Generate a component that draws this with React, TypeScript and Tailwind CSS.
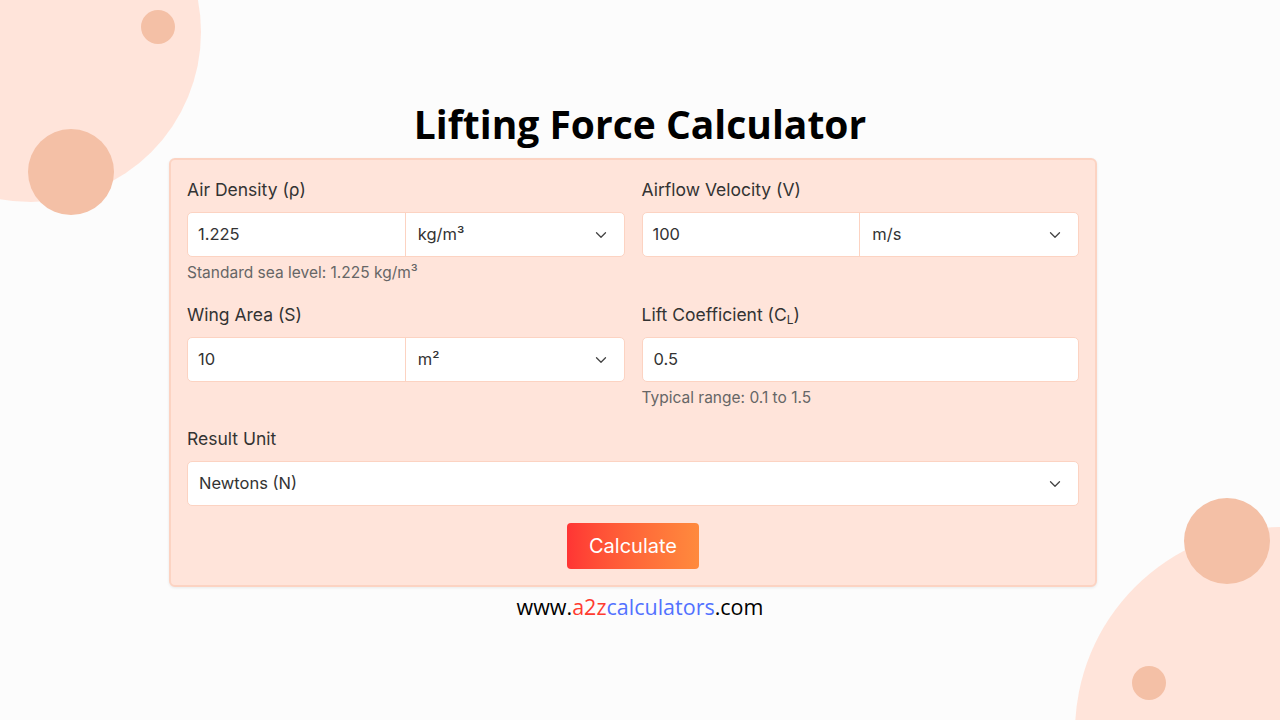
import { ChevronDown } from "lucide-react";

function Chevron() {
  return <ChevronDown size={18} strokeWidth={1.75} className="text-[#444]" />;
}

function UnitInput({ value, unit }: { value: string; unit: string }) {
  return (
    <div className="flex h-[45px] rounded-[5px] border border-[#fcd3c2] bg-white">
      <div className="flex w-1/2 items-center border-r border-[#fcd3c2] pl-[10px] text-[16.5px] text-[#333]">{value}</div>
      <div className="flex w-1/2 items-center justify-between pl-[12px] pr-[14px] text-[16.5px] text-[#333]">
        <span>{unit}</span>
        <Chevron />
      </div>
    </div>
  );
}

function Label({ children }: { children: React.ReactNode }) {
  return <div className="mb-[10px] h-[24px] text-[17.5px] leading-[24px] text-[#333]">{children}</div>;
}

function Hint({ children }: { children: React.ReactNode }) {
  return <div className="mt-[6px] text-[15.5px] leading-[20px] text-[#666]">{children}</div>;
}

export default function App() {
  return (
    <div className="relative h-[720px] w-[1280px] overflow-hidden bg-[#fcfcfc]" style={{ fontFamily: "Inter, 'Noto Sans', sans-serif" }}>
      {/* decorative circles */}
      <div className="absolute left-[-139px] top-[-138px] h-[340px] w-[340px] rounded-full bg-[#ffe4da]" />
      <div className="absolute left-[141px] top-[10px] h-[34px] w-[34px] rounded-full bg-[#f4c0a6]" />
      <div className="absolute left-[28px] top-[129px] h-[86px] w-[86px] rounded-full bg-[#f4c0a6]" />
      <div className="absolute left-[1075px] top-[527px] h-[410px] w-[410px] rounded-full bg-[#ffe4da]" />
      <div className="absolute left-[1184px] top-[498px] h-[86px] w-[86px] rounded-full bg-[#f4c0a6]" />
      <div className="absolute left-[1132px] top-[666px] h-[34px] w-[34px] rounded-full bg-[#f4c0a6]" />

      <div className="relative flex flex-col items-center pt-[100px]">
        <h1 className="text-[39px] font-bold leading-[48px] text-black" style={{ fontFamily: "'Open Sans', sans-serif" }}>
          Lifting Force Calculator
        </h1>

        <div className="mr-[14px] mt-[10px] w-[928px] rounded-[6px] border-2 border-[#fcd3c2] bg-[#ffe4da] px-[16px] pb-[16px] pt-[18px] shadow-[0_1px_3px_rgba(0,0,0,0.08)]">
          <div className="grid grid-cols-2 gap-x-[17px] gap-y-[20px]">
            <div>
              <Label>Air Density (ρ)</Label>
              <UnitInput value="1.225" unit="kg/m³" />
              <Hint>Standard sea level: 1.225 kg/m³</Hint>
            </div>
            <div>
              <Label>Airflow Velocity (V)</Label>
              <UnitInput value="100" unit="m/s" />
            </div>
            <div>
              <Label>Wing Area (S)</Label>
              <UnitInput value="10" unit="m²" />
            </div>
            <div>
              <Label>
                Lift Coefficient (C<sub className="text-[12px]">L</sub>)
              </Label>
              <div className="flex h-[45px] items-center rounded-[5px] border border-[#fcd3c2] bg-white pl-[11px] text-[16.5px] text-[#333]">0.5</div>
              <Hint>Typical range: 0.1 to 1.5</Hint>
            </div>
          </div>

          <div className="mt-[19px]">
            <Label>Result Unit</Label>
            <div className="flex h-[45px] items-center justify-between rounded-[5px] border border-[#fcd3c2] bg-white pl-[11px] pr-[14px] text-[16.5px] text-[#333]">
              <span>Newtons (N)</span>
              <Chevron />
            </div>
          </div>

          <div className="mt-[17px] flex justify-center">
            <button className="h-[46px] w-[132px] rounded-[4px] bg-gradient-to-r from-[#ff3434] to-[#ff8a3d] text-[20px] text-white">
              Calculate
            </button>
          </div>
        </div>

        <div className="mt-[6px] text-[21.5px] leading-[28px] text-black" style={{ fontFamily: "'Open Sans', sans-serif" }}>
          www.<span className="text-[#ff3b30]">a2z</span>
          <span className="text-[#5271ff]">calculators</span>.com
        </div>
      </div>
    </div>
  );
}
